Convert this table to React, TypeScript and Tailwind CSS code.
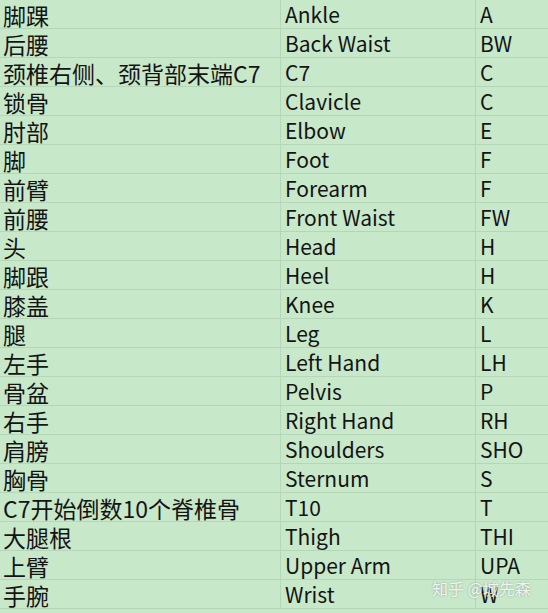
import React from "react";

const rows: [string, string, string][] = [
  ["脚踝", "Ankle", "A"],
  ["后腰", "Back Waist", "BW"],
  ["颈椎右侧、颈背部末端C7", "C7", "C"],
  ["锁骨", "Clavicle", "C"],
  ["肘部", "Elbow", "E"],
  ["脚", "Foot", "F"],
  ["前臂", "Forearm", "F"],
  ["前腰", "Front Waist", "FW"],
  ["头", "Head", "H"],
  ["脚跟", "Heel", "H"],
  ["膝盖", "Knee", "K"],
  ["腿", "Leg", "L"],
  ["左手", "Left Hand", "LH"],
  ["骨盆", "Pelvis", "P"],
  ["右手", "Right Hand", "RH"],
  ["肩膀", "Shoulders", "SHO"],
  ["胸骨", "Sternum", "S"],
  ["C7开始倒数10个脊椎骨", "T10", "T"],
  ["大腿根", "Thigh", "THI"],
  ["上臂", "Upper Arm", "UPA"],
  ["手腕", "Wrist", "W"],
];

export default function App() {
  return (
    <div
      className="relative w-[548px] h-[613px] overflow-hidden bg-[#c8e8ca] text-[#141414]"
      style={{ fontFamily: '"Noto Sans CJK SC", "Noto Sans", sans-serif' }}
    >
      <div className="flex flex-col">
        {rows.map((r, i) => (
          <div key={i} className="flex h-[29px] border-b border-[#b5d6b7]">
            <div className="w-[281px] shrink-0 border-r border-[#b5d6b7] pl-[3px] text-[23px] leading-[28px] pt-[1px] whitespace-nowrap">
              {r[0]}
            </div>
            <div className="w-[195px] shrink-0 border-r border-[#b5d6b7] pl-[4px] text-[21px] leading-[27px] pt-[1px] whitespace-nowrap">
              {r[1]}
            </div>
            <div className="flex-1 pl-[4px] text-[21px] leading-[27px] pt-[1px] whitespace-nowrap">
              {r[2]}
            </div>
          </div>
        ))}
      </div>
      <div className="absolute left-[432px] top-[578px] text-[16px] leading-[20px] text-white/85 whitespace-nowrap [text-shadow:0_0_2px_rgba(0,0,0,0.35)]">
        知乎 @城先森
      </div>
    </div>
  );
}
